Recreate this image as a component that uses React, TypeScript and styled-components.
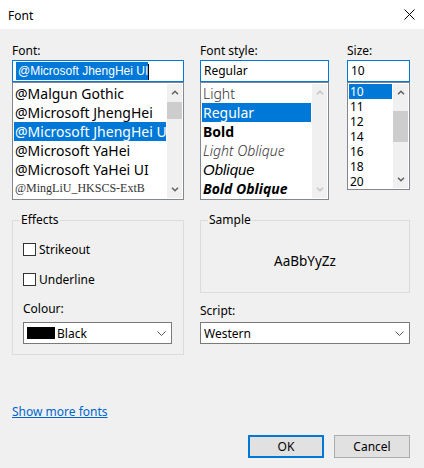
import styled, { createGlobalStyle } from "styled-components";

const GlobalStyle = createGlobalStyle`
  html, body {
    margin: 0;
    padding: 0;
    background: #f0f0f0;
  }
  body {
    font-family: "Noto Sans", "Open Sans", sans-serif;
    font-size: 12px;
    color: #000;
  }
`;

const fonts = [
  { name: "@Malgun Gothic" },
  { name: "@Microsoft JhengHei" },
  { name: "@Microsoft JhengHei UI", selected: true },
  { name: "@Microsoft YaHei" },
  { name: "@Microsoft YaHei UI" },
  { name: "@MingLiU_HKSCS-ExtB", serif: true },
];

const styles = [
  { name: "Light", weight: 300, color: "#333" },
  { name: "Regular", weight: 400, selected: true },
  { name: "Bold", weight: 700 },
  { name: "Light Oblique", weight: 300, italic: true, color: "#333" },
  { name: "Oblique", weight: 400, italic: true, plain: true },
  { name: "Bold Oblique", weight: 700, italic: true },
];

const sizes = ["10", "11", "12", "14", "16", "18", "20"];

function Arrow({ up, disabled }: { up?: boolean; disabled?: boolean }) {
  return (
    <svg width="8" height="5" viewBox="0 0 8 5">
      <path
        d={up ? "M1 4.3 L4 1.3 L7 4.3" : "M1 0.7 L4 3.7 L7 0.7"}
        fill="none"
        stroke={disabled ? "#c4c4c4" : "#606060"}
        strokeWidth="1.5"
      />
    </svg>
  );
}

function Chevron() {
  return (
    <svg width="9" height="5" viewBox="0 0 9 5">
      <path d="M0.5 0.5 L4.5 4.5 L8.5 0.5" fill="none" stroke="#555" strokeWidth="1" />
    </svg>
  );
}

function Scroll({ thumbTop, thumbHeight, disabled }: { thumbTop?: number; thumbHeight?: number; disabled?: boolean }) {
  return (
    <ScrollBar>
      <ArrowCell>
        <Arrow up disabled={disabled} />
      </ArrowCell>
      <Track>
        {thumbHeight ? <Thumb style={{ marginTop: thumbTop, height: thumbHeight }} /> : null}
      </Track>
      <ArrowCell>
        <Arrow disabled={disabled} />
      </ArrowCell>
    </ScrollBar>
  );
}

export default function App() {
  return (
    <>
      <GlobalStyle />
      <Window>
        <TitleBar>
          <Title>Font</Title>
          <Close>
            <svg width="11" height="11" viewBox="0 0 11 11">
              <path d="M0.5 0.5 L10.5 10.5 M10.5 0.5 L0.5 10.5" stroke="#000" strokeWidth="1" />
            </svg>
          </Close>
        </TitleBar>

        <Body>
          <TopRow>
            <Column $width={172} $gap={16}>
              <Label>Font:</Label>
              <TextBox>
                <InputText>
                  <Highlight>@Microsoft JhengHei UI</Highlight>
                  <Caret />
                </InputText>
              </TextBox>
              <ListBox $height={118}>
                <Items>
                  {fonts.map((f) => (
                    <FontItem key={f.name} $selected={f.selected} $serif={f.serif}>
                      {f.name}
                    </FontItem>
                  ))}
                </Items>
                <Scroll thumbTop={1} thumbHeight={17} />
              </ListBox>
            </Column>

            <Column $width={129} $gap={18}>
              <Label>Font style:</Label>
              <TextBox>
                <InputText>Regular</InputText>
              </TextBox>
              <ListBox $height={118}>
                <Items>
                  {styles.map((s) => (
                    <StyleItem
                      key={s.name}
                      $selected={s.selected}
                      $weight={s.weight}
                      $italic={s.italic}
                      $color={s.color}
                      $plain={s.plain}
                    >
                      {s.name}
                    </StyleItem>
                  ))}
                </Items>
                <Scroll disabled />
              </ListBox>
            </Column>

            <Column $width={63} $gap={0}>
              <Label>Size:</Label>
              <TextBox>
                <InputText>10</InputText>
              </TextBox>
              <ListBox $height={108}>
                <Items>
                  {sizes.map((s, i) => (
                    <SizeItem key={s} $selected={i === 0}>
                      {s}
                    </SizeItem>
                  ))}
                </Items>
                <Scroll thumbTop={10} thumbHeight={31} />
              </ListBox>
            </Column>
          </TopRow>

          <MiddleRow>
            <Effects>
              <Legend $inset={-3}>Effects</Legend>
              <CheckRow>
                <CheckBox />
                Strikeout
              </CheckRow>
              <CheckRow $top={14}>
                <CheckBox />
                Underline
              </CheckRow>
              <FieldLabel $top={14} $bottom={5}>
                Colour:
              </FieldLabel>
              <Combo>
                <Swatch />
                Black
                <ComboArrow>
                  <Chevron />
                </ComboArrow>
              </Combo>
            </Effects>

            <RightColumn>
              <Sample>
                <Legend $inset={7}>Sample</Legend>
                <SampleBody>AaBbYyZz</SampleBody>
              </Sample>
              <FieldLabel $top={10} $bottom={3}>
                Script:
              </FieldLabel>
              <Combo>
                Western
                <ComboArrow>
                  <Chevron />
                </ComboArrow>
              </Combo>
            </RightColumn>
          </MiddleRow>

          <MoreLink>Show more fonts</MoreLink>

          <ButtonRow>
            <Button $default>OK</Button>
            <Button>Cancel</Button>
          </ButtonRow>
        </Body>
      </Window>
    </>
  );
}

const Window = styled.div`
  width: 424px;
  height: 468px;
  background: #f0f0f0;
  display: flex;
  flex-direction: column;
  overflow: hidden;
`;

const TitleBar = styled.div`
  height: 29px;
  background: #fff;
  display: flex;
  align-items: center;
  justify-content: space-between;
  padding-left: 8px;
`;

const Title = styled.div`
  font-size: 12px;
  padding-top: 1px;
`;

const Close = styled.div`
  width: 30px;
  height: 29px;
  display: flex;
  align-items: center;
  justify-content: center;
`;

const Body = styled.div`
  display: flex;
  flex-direction: column;
  padding: 14px 14px 0 12px;
`;

const TopRow = styled.div`
  display: flex;
  align-items: flex-start;
`;

const Column = styled.div<{ $width: number; $gap: number }>`
  width: ${(p) => p.$width}px;
  margin-right: ${(p) => p.$gap}px;
  display: flex;
  flex-direction: column;
`;

const Label = styled.div`
  height: 16px;
  line-height: 16px;
  margin-bottom: 1px;
`;

const TextBox = styled.div`
  box-sizing: border-box;
  height: 22px;
  border: 1px solid #0078d7;
  background: #fff;
  padding: 0 4px 0 3px;
  overflow: hidden;
`;

const InputText = styled.div`
  line-height: 20px;
  white-space: nowrap;
`;

const Highlight = styled.span`
  background: #0078d7;
  color: #fff;
  font-family: "Liberation Sans", Arial, sans-serif;
  font-size: 12px;
  padding: 2px 0 2px 2px;
`;

const Caret = styled.span`
  display: inline-block;
  width: 1px;
  height: 16px;
  vertical-align: middle;
  background: #000;
`;

const ListBox = styled.div<{ $height: number }>`
  box-sizing: border-box;
  height: ${(p) => p.$height}px;
  border: 1px solid #828790;
  background: #fff;
  padding: 1px;
  display: flex;
  overflow: hidden;
`;

const Items = styled.div`
  flex: 1;
  min-width: 0;
  overflow: hidden;
  margin-right: 1px;
`;

const Row = styled.div<{ $selected?: boolean }>`
  white-space: nowrap;
  overflow: hidden;
  padding-left: 1px;
  background: ${(p) => (p.$selected ? "#0078d7" : "transparent")};
  color: ${(p) => (p.$selected ? "#fff" : "#000")};
`;

const FontItem = styled(Row)<{ $serif?: boolean }>`
  height: 19px;
  line-height: 19px;
  font-size: ${(p) => (p.$serif ? "12px" : "14px")};
  font-family: ${(p) => (p.$serif ? '"Liberation Serif", serif' : '"Noto Sans", sans-serif')};
  ${(p) => (p.$serif ? "color: #333;" : "")}
`;

const StyleItem = styled(Row)<{ $weight: number; $italic?: boolean; $color?: string; $plain?: boolean }>`
  height: 19px;
  line-height: 19px;
  font-size: ${(p) => (p.$plain ? "15px" : "14px")};
  font-family: ${(p) => (p.$plain ? '"Liberation Sans", sans-serif' : '"Noto Sans", sans-serif')};
  font-weight: ${(p) => p.$weight};
  font-style: ${(p) => (p.$italic ? "italic" : "normal")};
  ${(p) => (p.$color && !p.$selected ? `color: ${p.$color};` : "")}
`;

const SizeItem = styled(Row)`
  height: 15px;
  line-height: 15px;
  font-size: 12px;
`;

const ScrollBar = styled.div`
  width: 15px;
  background: #f0f0f0;
  display: flex;
  flex-direction: column;
`;

const ArrowCell = styled.div`
  height: 17px;
  display: flex;
  align-items: center;
  justify-content: center;
  flex-shrink: 0;
`;

const Track = styled.div`
  flex: 1;
  display: flex;
  flex-direction: column;
`;

const Thumb = styled.div`
  background: #cdcdcd;
`;

const MiddleRow = styled.div`
  display: flex;
  align-items: flex-start;
  margin-top: 13px;
`;

const GroupBox = styled.fieldset`
  margin: 0;
  min-width: 0;
  box-sizing: border-box;
  border: 1px solid #dcdcdc;
`;

const Legend = styled.legend<{ $inset: number }>`
  padding: 0 1px;
  margin-left: ${(p) => p.$inset}px;
  line-height: 14px;
`;

const Effects = styled(GroupBox)`
  width: 172px;
  margin-right: 16px;
  padding: 14px 11px 10px 10px;
  display: flex;
  flex-direction: column;
`;

const CheckRow = styled.div<{ $top?: number }>`
  display: flex;
  align-items: center;
  height: 16px;
  margin-top: ${(p) => p.$top || 0}px;
`;

const CheckBox = styled.span`
  box-sizing: border-box;
  width: 13px;
  height: 13px;
  border: 1px solid #333;
  background: #fff;
  margin-right: 3px;
`;

const FieldLabel = styled.div<{ $top: number; $bottom: number }>`
  height: 16px;
  line-height: 16px;
  margin-top: ${(p) => p.$top}px;
  margin-bottom: ${(p) => p.$bottom}px;
`;

const Combo = styled.div`
  box-sizing: border-box;
  height: 22px;
  border: 1px solid #7a7a7a;
  background: #fff;
  display: flex;
  align-items: center;
  padding: 0 5px 0 3px;
`;

const Swatch = styled.span`
  width: 28px;
  height: 12px;
  background: #000;
  margin-right: 2px;
`;

const ComboArrow = styled.span`
  margin-left: auto;
  display: flex;
`;

const RightColumn = styled.div`
  width: 210px;
  display: flex;
  flex-direction: column;
`;

const Sample = styled(GroupBox)`
  padding: 0;
`;

const SampleBody = styled.div`
  height: 65px;
  display: flex;
  align-items: center;
  justify-content: center;
  font-size: 13.5px;
  box-sizing: border-box;
  padding-top: 3px;
`;

const MoreLink = styled.a`
  color: #0066cc;
  text-decoration: underline;
  line-height: 16px;
  margin-top: 49px;
  align-self: flex-start;
  cursor: pointer;
`;

const ButtonRow = styled.div`
  display: flex;
  justify-content: flex-end;
  gap: 10px;
  margin-top: 15px;
`;

const Button = styled.button<{ $default?: boolean }>`
  box-sizing: border-box;
  width: 76px;
  height: 23px;
  padding: 0;
  background: #e1e1e1;
  border: ${(p) => (p.$default ? "2px solid #0078d7" : "1px solid #adadad")};
  font-family: "Noto Sans", sans-serif;
  font-size: 12px;
  color: #000;
`;
